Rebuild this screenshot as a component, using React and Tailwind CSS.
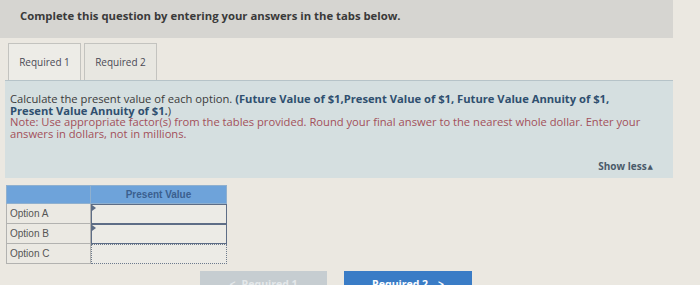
import React from "react";

export default function App() {
  return (
    <div className="w-[700px] h-[285px] overflow-hidden bg-[#ebe8e1] relative" style={{ fontFamily: '"Open Sans", "DejaVu Sans", sans-serif' }}>
      <div className="w-[673px] h-[38px] bg-[#d6d5d1] pl-[20px] pt-[8px]">
        <p className="text-[11.3px] font-bold text-[#3a3a3a]">Complete this question by entering your answers in the tabs below.</p>
      </div>
      <div className="pl-[5px] w-[673px]">
        <div className="flex gap-[3px] pl-[3px] mt-[5px] h-[37px]">
          <div className="w-[73px] h-[37px] border border-b-0 border-[#c3c3bf] bg-[#edece7] flex items-center justify-center text-[10px] text-[#4a4a55]">Required 1</div>
          <div className="w-[73px] h-[37px] border border-b-0 border-[#c3c3bf] bg-[#e8e7e1] flex items-center justify-center text-[10px] text-[#4a4a55]">Required 2</div>
        </div>
        <div className="h-[98px] bg-[#d5dfe0] border-t border-[#b6c3c8] pl-[5px] pr-[20px] pt-[12px] text-[11.2px] leading-[11.5px] text-[#3a3a3a] relative">
          <p>
            Calculate the present value of each option. <span className="font-bold text-[#2f4f6f]">(Future Value of $1,Present Value of $1, Future Value Annuity of $1, Present Value Annuity of $1.</span>)
          </p>
          <p className="text-[#a3505a]">
            Note: Use appropriate factor(s) from the tables provided. Round your final answer to the nearest whole dollar. Enter your answers in dollars, not in millions.
          </p>
          <div className="absolute right-[20px] top-[80px] text-[10px] font-bold text-[#4a5a6a] flex items-center gap-[1px]">
            Show less<span className="text-[7px]">▲</span>
          </div>
        </div>
      </div>
      <div className="ml-[6px] mt-[7px] w-[221px]" style={{ fontFamily: '"Liberation Sans", Arial, sans-serif' }}>
        <div className="grid grid-cols-[85px_136px] text-[10px]">
          <div className="h-[19px] bg-[#6ea3da] border border-[#8fb0cf]"></div>
          <div className="h-[19px] bg-[#6ea3da] border border-l-0 border-[#8fb0cf] flex items-center justify-center font-bold text-[#3b5f8f]">Present Value</div>
          <div className="h-[20px] bg-[#ebe9e3] border border-t-0 border-[#b2b2b0] pl-[3px] flex items-center text-[#555]">Option A</div>
          <div className="h-[20px] bg-[#ecebe6] border-[1.5px] border-[#5d6d86] relative">
            <span className="absolute left-0 top-0 w-0 h-0 border-t-[3px] border-b-[3px] border-l-[4px] border-t-transparent border-b-transparent border-l-[#5d6d86]"></span>
          </div>
          <div className="h-[20px] bg-[#ebe9e3] border border-t-0 border-[#b2b2b0] pl-[3px] flex items-center text-[#555]">Option B</div>
          <div className="h-[20px] bg-[#ecebe6] border-[1.5px] border-[#5d6d86] relative">
            <span className="absolute left-0 top-0 w-0 h-0 border-t-[3px] border-b-[3px] border-l-[4px] border-t-transparent border-b-transparent border-l-[#5d6d86]"></span>
          </div>
          <div className="h-[20px] bg-[#ebe9e3] border border-t-0 border-[#b2b2b0] pl-[3px] flex items-center text-[#555]">Option C</div>
          <div className="h-[20px] bg-[#ecebe6] border border-dotted border-[#6d7a8c]"></div>
        </div>
      </div>
      <div className="flex gap-[17px] ml-[200px] mt-[7px]">
        <div className="w-[127px] h-[20px] bg-[#c6cdd1] flex items-start pt-[6px] justify-center text-[10.5px] font-bold text-[#e4e8ea] gap-[6px]">
          <span>&lt;</span><span>Required 1</span>
        </div>
        <div className="w-[128px] h-[20px] bg-[#3a7cc6] flex items-start pt-[6px] justify-center text-[10.5px] font-bold text-white gap-[10px]">
          <span>Required 2</span><span>&gt;</span>
        </div>
      </div>
    </div>
  );
}
